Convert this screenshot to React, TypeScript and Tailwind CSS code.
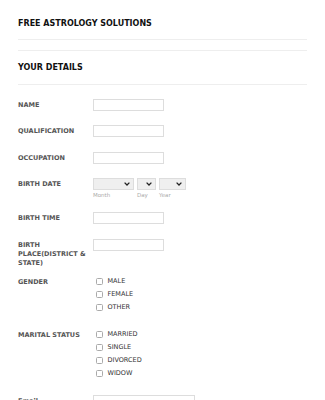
import React from 'react';

const Label: React.FC<{ children: React.ReactNode }> = ({ children }) => (
  <div className="w-[75px] shrink-0 pr-1 pt-[2px] text-[6.5px] font-bold leading-[9px] text-[#555]">{children}</div>
);

const TextInput: React.FC<{ w?: string }> = ({ w = 'w-[71px]' }) => (
  <div className={`${w} h-[12px] border border-[#ddd] bg-white`} />
);

const Chevron = () => (
  <svg width="6" height="4" viewBox="0 0 6 4" className="shrink-0">
    <path d="M0.6 0.6 L3 3 L5.4 0.6" fill="none" stroke="#222" strokeWidth="1.3" />
  </svg>
);

const Select: React.FC<{ w: string }> = ({ w }) => (
  <div className={`${w} h-[12px] border border-[#ddd] bg-[#efefef] flex items-center justify-end pr-[3px]`}>
    <Chevron />
  </div>
);

const Check: React.FC<{ label: string }> = ({ label }) => (
  <div className="flex items-center h-[13px]">
    <div className="ml-[3px] w-[6.5px] h-[6.5px] border border-[#aaa] rounded-[1.5px] bg-white" />
    <span className="ml-[5px] text-[6.5px] text-[#333]">{label}</span>
  </div>
);

export default function App() {
  return (
    <div className="w-[325px] h-[400px] overflow-hidden bg-white px-[18px] font-['DejaVu_Sans',Verdana,sans-serif]">
      <div className="h-[39px] flex items-center pt-[8px] text-[8px] font-bold text-[#111]">FREE ASTROLOGY SOLUTIONS</div>
      <div className="border-t border-[#eee]" />
      <div className="h-[10px]" />
      <div className="border-t border-[#eee]" />
      <div className="h-[33px] flex items-center text-[8px] font-bold text-[#111]">YOUR DETAILS</div>
      <div className="border-t border-[#eee]" />
      <div className="h-[14px]" />

      <div className="flex h-[26px]">
        <Label>NAME</Label>
        <TextInput />
      </div>
      <div className="flex h-[27px]">
        <Label>QUALIFICATION</Label>
        <TextInput />
      </div>
      <div className="flex h-[26px]">
        <Label>OCCUPATION</Label>
        <TextInput />
      </div>
      <div className="flex h-[34px]">
        <Label>BIRTH DATE</Label>
        <div className="flex gap-[3px]">
          <div>
            <Select w="w-[41px]" />
            <div className="text-[5.5px] text-[#aaa] mt-[1px]">Month</div>
          </div>
          <div>
            <Select w="w-[19px]" />
            <div className="text-[5.5px] text-[#aaa] mt-[1px]">Day</div>
          </div>
          <div>
            <Select w="w-[27px]" />
            <div className="text-[5.5px] text-[#aaa] mt-[1px]">Year</div>
          </div>
        </div>
      </div>
      <div className="flex h-[27px]">
        <Label>BIRTH TIME</Label>
        <TextInput />
      </div>
      <div className="flex h-[37px]">
        <Label>BIRTH PLACE(DISTRICT &amp; STATE)</Label>
        <TextInput />
      </div>
      <div className="flex h-[53px]">
        <Label>GENDER</Label>
        <div className="-mt-[1px]">
          <Check label="MALE" />
          <Check label="FEMALE" />
          <Check label="OTHER" />
        </div>
      </div>
      <div className="flex h-[66px]">
        <Label>MARITAL STATUS</Label>
        <div className="-mt-[1px]">
          <Check label="MARRIED" />
          <Check label="SINGLE" />
          <Check label="DIVORCED" />
          <Check label="WIDOW" />
        </div>
      </div>
      <div className="flex">
        <Label>Email</Label>
        <TextInput w="w-[102px]" />
      </div>
    </div>
  );
}
